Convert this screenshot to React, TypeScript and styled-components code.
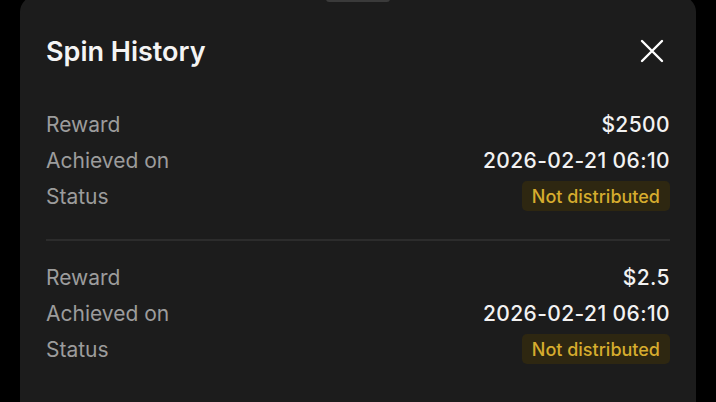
import styled, { createGlobalStyle } from 'styled-components';

interface SpinRecord {
  reward: string;
  achievedOn: string;
  status: string;
}

const records: SpinRecord[] = [
  { reward: '$2500', achievedOn: '2026-02-21 06:10', status: 'Not distributed' },
  { reward: '$2.5', achievedOn: '2026-02-21 06:10', status: 'Not distributed' },
];

export default function App() {
  return (
    <>
      <GlobalStyle />
      <Page>
        <Sheet>
          <Handle />
          <Header>
            <Title>Spin History</Title>
            <CloseButton aria-label="Close">
              <svg width="24" height="24" viewBox="0 0 24 24" fill="none">
                <path d="M2 2L22 22M22 2L2 22" stroke="#fff" strokeWidth="2.4" strokeLinecap="round" />
              </svg>
            </CloseButton>
          </Header>
          {records.map((r, i) => (
            <div key={i}>
              {i > 0 && <Divider />}
              <Record>
                <Row>
                  <Label>Reward</Label>
                  <Value>{r.reward}</Value>
                </Row>
                <Row>
                  <Label>Achieved on</Label>
                  <Value>{r.achievedOn}</Value>
                </Row>
                <Row>
                  <Label>Status</Label>
                  <Badge>{r.status}</Badge>
                </Row>
              </Record>
            </div>
          ))}
        </Sheet>
      </Page>
    </>
  );
}

const GlobalStyle = createGlobalStyle`
  html, body {
    margin: 0;
    padding: 0;
    background: #000;
    overflow: hidden;
  }
  body {
    font-family: Inter, "Open Sans", sans-serif;
  }
`;

const Page = styled.div`
  width: 716px;
  height: 402px;
  overflow: hidden;
  background: #000;
`;

const Sheet = styled.div`
  margin: -8px 20px 0;
  padding: 0 26px;
  height: 420px;
  background: #1c1c1c;
  border-radius: 16px 16px 0 0;
`;

const Handle = styled.div`
  width: 64px;
  height: 6px;
  margin: 4px auto 0;
  border-radius: 3px;
  background: #3a3a3a;
`;

const Header = styled.div`
  display: flex;
  align-items: center;
  justify-content: space-between;
  height: 50px;
  margin-top: 24px;
  margin-bottom: 30px;
`;

const Title = styled.h1`
  margin: 0;
  font-size: 27px;
  font-weight: 600;
  color: #f4f4f4;
`;

const CloseButton = styled.button`
  display: flex;
  align-items: center;
  justify-content: center;
  width: 24px;
  height: 24px;
  margin-right: 6px;
  padding: 0;
  border: none;
  background: transparent;
  cursor: pointer;
`;

const Record = styled.div`
  display: flex;
  flex-direction: column;
`;

const Row = styled.div`
  display: flex;
  align-items: center;
  justify-content: space-between;
  height: 36px;
`;

const Label = styled.span`
  font-size: 21px;
  color: #9c9c9c;
`;

const Value = styled.span`
  font-size: 21px;
  font-weight: 500;
  letter-spacing: 0.4px;
  color: #f2f2f2;
`;

const Badge = styled.span`
  display: inline-flex;
  align-items: center;
  height: 30px;
  padding: 0 10px;
  border-radius: 5px;
  background: #2e2711;
  color: #d6ac2e;
  font-size: 18px;
  font-weight: 500;
`;

const Divider = styled.div`
  height: 2px;
  margin: 25px 0 18px;
  background: #2c2c2c;
`;
